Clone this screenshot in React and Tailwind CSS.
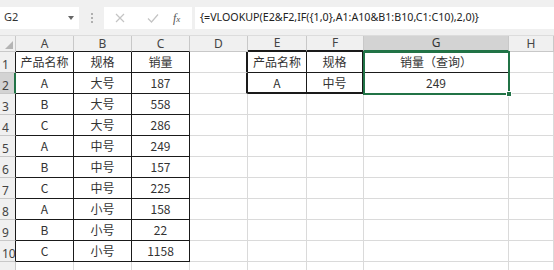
import React from 'react';

const COLS = 'grid grid-cols-[16px_58px_58px_58px_58px_59px_57px_145px_45px]';
const FONT = { fontFamily: '"Noto Sans CJK SC", "Noto Sans", sans-serif' };

const DATA = [
  ['产品名称', '规格', '销量', '', '产品名称', '规格', '销量（查询）', ''],
  ['A', '大号', '187', '', 'A', '中号', '249', ''],
  ['B', '大号', '558', '', '', '', '', ''],
  ['C', '大号', '286', '', '', '', '', ''],
  ['A', '中号', '249', '', '', '', '', ''],
  ['B', '中号', '157', '', '', '', '', ''],
  ['C', '中号', '225', '', '', '', '', ''],
  ['A', '小号', '158', '', '', '', '', ''],
  ['B', '小号', '22', '', '', '', '', ''],
  ['C', '小号', '1158', '', '', '', '', ''],
  ['', '', '', '', '', '', '', ''],
];

// border classes for a data cell, by row (0-based) and column (0 = A)
function cellBorder(r, c) {
  const inTable = r < 10 && c <= 2;
  let right = 'border-r border-r-[#dadada]';
  let bottom = 'border-b border-b-[#dadada]';
  if (inTable) {
    right = 'border-r border-r-[#1a1a1a]';
    bottom = 'border-b border-b-[#1a1a1a]';
  }
  if (c === 3 && r < 2) right = 'border-r-2 border-r-[#1a1a1a]';
  if (c === 4 && r < 2) right = 'border-r border-r-[#1a1a1a]';
  if (c === 5 && r < 2) right = 'border-r-2 border-r-[#1a1a1a]';
  if ((c === 4 || c === 5) && r === 0) bottom = 'border-b border-b-[#1a1a1a]';
  if ((c === 4 || c === 5) && r === 1) bottom = 'border-b-2 border-b-[#1a1a1a]';
  if (c === 6 && r === 0) bottom = 'border-b border-b-[#1a1a1a]';
  return `${right} ${bottom}`;
}

function headerBorder(c) {
  if (c <= 2) return 'border-b border-b-[#1a1a1a]';
  if (c === 4 || c === 5) return 'border-b-2 border-b-[#1a1a1a]';
  if (c === 6) return 'border-b-2 border-b-[#217346]';
  return 'border-b border-b-[#c8c8c8]';
}

export default function App() {
  return (
    <div className="w-[554px] h-[270px] overflow-hidden bg-white relative" style={FONT}>
      {/* formula bar */}
      <div className="h-[36px] bg-[#f0f0f0] border-b border-[#dcdcdc] flex items-center">
        <div className="w-[79px] h-[22px] bg-white flex items-center justify-between pl-[4px] pr-[5px]">
          <span className="text-[11px] text-[#333]" style={{ fontFamily: '"Noto Sans", sans-serif' }}>G2</span>
          <span className="w-0 h-0 border-l-[3px] border-r-[3px] border-t-[4px] border-l-transparent border-r-transparent border-t-[#666]" />
        </div>
        <div className="w-[25px] flex flex-col items-center gap-[2px]">
          <span className="w-[2px] h-[2px] bg-[#b0b0b0]" />
          <span className="w-[2px] h-[2px] bg-[#b0b0b0]" />
          <span className="w-[2px] h-[2px] bg-[#b0b0b0]" />
        </div>
        <div className="w-[88px] h-[22px] bg-white flex items-center">
          <svg width="10" height="10" viewBox="0 0 10 10" className="ml-[11px]">
            <path d="M1 1L9 9M9 1L1 9" stroke="#c4c4c4" strokeWidth="1.2" />
          </svg>
          <svg width="12" height="10" viewBox="0 0 12 10" className="ml-[22px]">
            <path d="M1 5.5L4.5 9L11 1.5" stroke="#c4c4c4" strokeWidth="1.2" fill="none" />
          </svg>
          <span className="ml-[14px] text-[12px] italic text-[#555]" style={{ fontFamily: '"Liberation Serif", serif' }}>
            f<span className="text-[9px]">x</span>
          </span>
        </div>
        <div className="ml-[3px] flex-1 h-[22px] bg-white flex items-center pl-[5px]">
          <span className="text-[10.7px] text-[#222] whitespace-nowrap" style={{ fontFamily: '"Noto Sans", sans-serif' }}>
            {'{=VLOOKUP(E2&F2,IF({1,0},A1:A10&B1:B10,C1:C10),2,0)}'}
          </span>
        </div>
      </div>

      {/* column headers */}
      <div className={`${COLS} h-[16px] bg-[#f0f0f0] text-[12px] text-[#444]`}>
        <div className="border-r border-b border-[#c8c8c8] flex items-end justify-end pr-[2px] pb-[2px]">
          <span className="w-0 h-0 border-l-[8px] border-t-[8px] border-l-transparent border-t-transparent border-b-0 border-r-0 relative">
            <span className="absolute right-0 bottom-0 w-0 h-0 border-l-[8px] border-b-[8px] border-l-transparent border-b-[#b4b4b4]" />
          </span>
        </div>
        {['A', 'B', 'C', 'D', 'E', 'F', 'G', 'H'].map((l, c) => (
          <div
            key={l}
            className={`flex items-center justify-center leading-none border-r border-r-[#c8c8c8] ${headerBorder(c)} ${c === 6 ? 'bg-[#d3d3d3] text-[#333]' : ''}`}
            style={{ fontFamily: '"Noto Sans", sans-serif' }}
          >
            {l}
          </div>
        ))}
      </div>

      {/* rows */}
      {DATA.map((row, r) => (
        <div key={r} className={`${COLS} h-[21px] text-[12px] text-[#333]`}>
          <div
            className={`flex items-end pl-[2px] pb-[1px] text-[12px] leading-none text-[#444] border-b border-b-[#c8c8c8] ${
              r === 1 ? 'bg-[#d3d3d3] border-r-2 border-r-[#217346]' : r < 10 ? 'bg-[#f0f0f0] border-r border-r-[#1a1a1a]' : 'bg-[#f0f0f0] border-r border-r-[#c8c8c8]'
            }`}
            style={{ fontFamily: '"Noto Sans", sans-serif' }}
          >
            {r + 1}
          </div>
          {row.map((v, c) => (
            <div key={c} className={`flex items-center justify-center leading-none ${cellBorder(r, c)}`}>
              {v}
            </div>
          ))}
        </div>
      ))}

      {/* selection G1:G2 */}
      <div className="absolute left-[363px] top-[51px] w-[147px] h-[44px] border-2 border-[#217346]" />
      <div className="absolute left-[506px] top-[91px] w-[6px] h-[6px] bg-[#217346] border border-white" />
    </div>
  );
}
